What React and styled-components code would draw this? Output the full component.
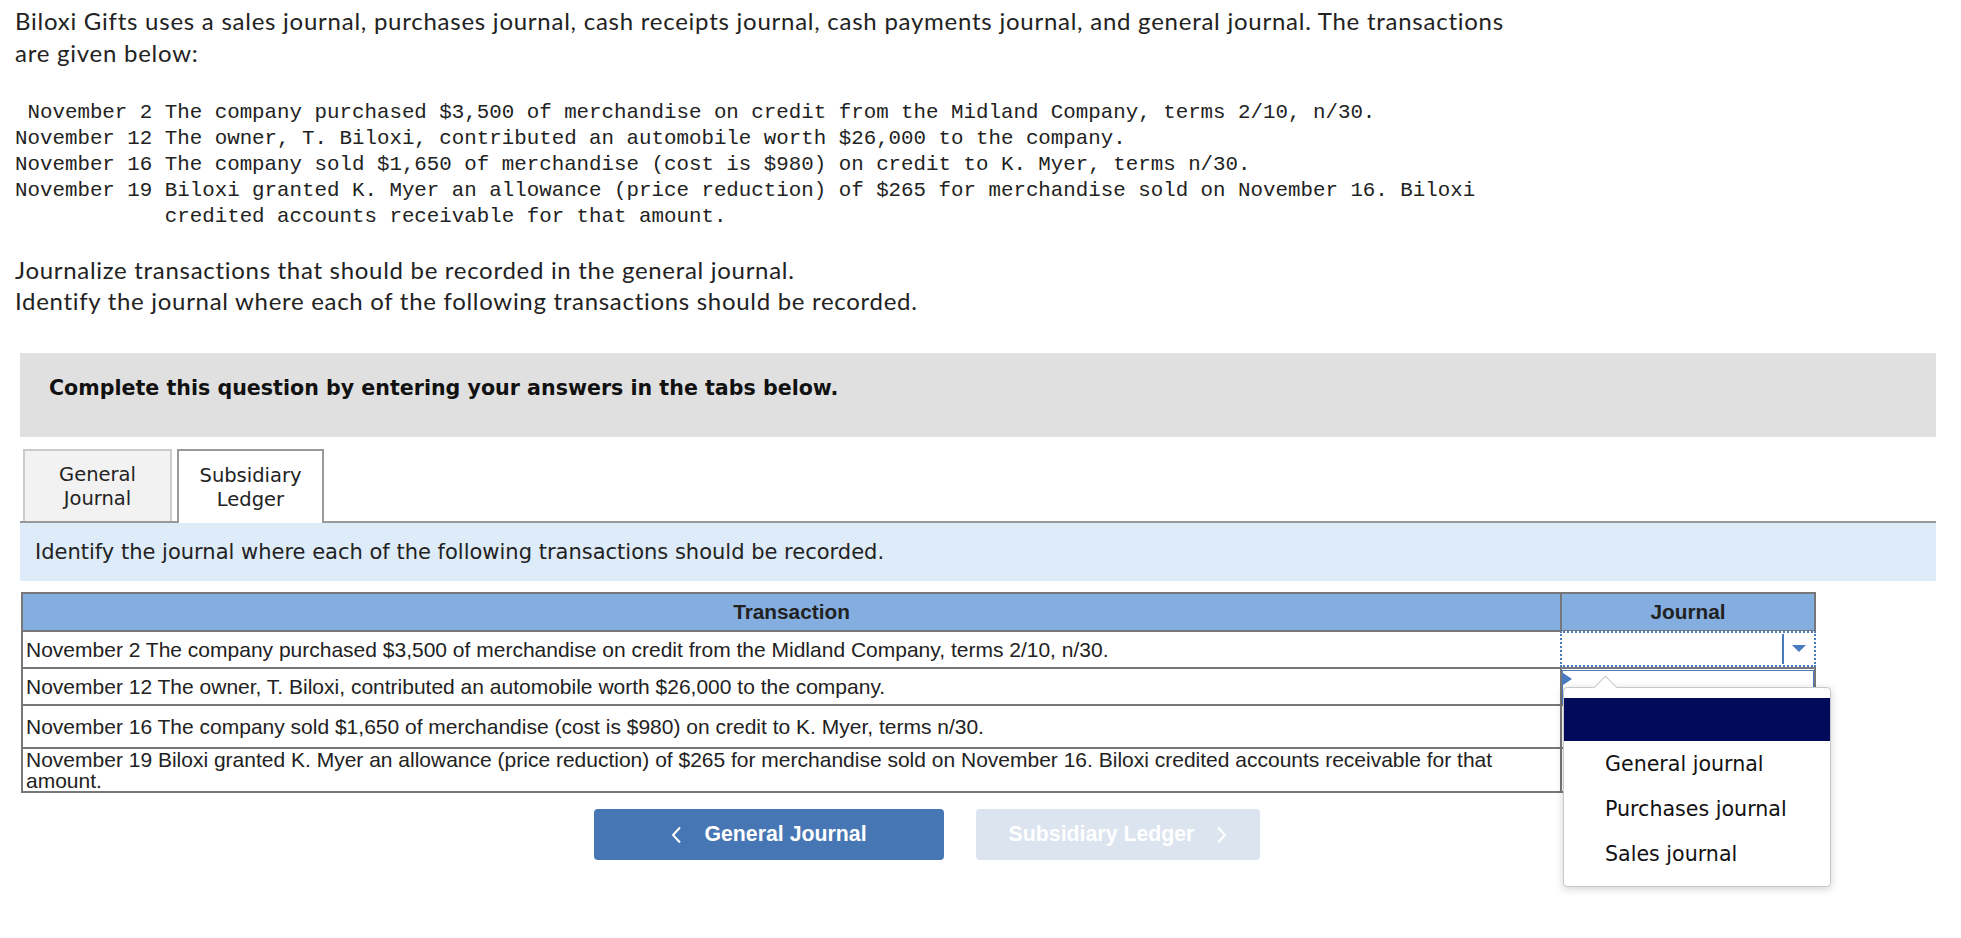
import React from 'react';
import styled, { createGlobalStyle } from 'styled-components';

/* Global */

const GlobalStyle = createGlobalStyle`
  body {
    margin: 0;
    background: #fff;
    color: #222;
  }
`;

/* Styled Components */

const Page = styled.div`
  padding: 5px 25px 40px 15px;
`;

const Intro = styled.p`
  margin: 0;
  max-width: 1520px;
  font-family: Lato, "Open Sans", sans-serif;
  font-size: 24px;
  letter-spacing: 0.75px;
  line-height: 32px;
  color: #222;
`;

const Listing = styled.pre`
  margin: 31px 0 0;
  font-family: "Liberation Mono", monospace;
  font-size: 20.8px;
  line-height: 26px;
  color: #222;
`;

const Instructions = styled.p`
  margin: 24px 0 0;
  font-family: Lato, "Open Sans", sans-serif;
  font-size: 24px;
  letter-spacing: 0.7px;
  line-height: 31px;
  color: #222;
`;

const Question = styled.div`
  margin: 37px 0 0 5px;
  width: 1916px;
`;

const Banner = styled.div`
  display: flex;
  align-items: center;
  height: 84px;
  box-sizing: border-box;
  padding: 0 29px 14px;
  background: #e0e0e0;
  font-family: "DejaVu Sans", Verdana, sans-serif;
  font-size: 20.6px;
  font-weight: bold;
  color: #111;
`;

const TabBar = styled.div`
  display: flex;
  gap: 5px;
  margin-top: 12px;
  padding-left: 3px;
  border-bottom: 2px solid #999;
`;

const Tab = styled.div`
  display: flex;
  align-items: center;
  justify-content: center;
  box-sizing: border-box;
  height: ${(props) => (props.active ? '74px' : '72px')};
  width: ${(props) => props.width}px;
  margin-bottom: ${(props) => (props.active ? '-2px' : '0')};
  padding-top: 2px;
  border: 2px solid ${(props) => (props.active ? '#999' : '#cbcbcb')};
  border-bottom: ${(props) => (props.active ? 'none' : '0')};
  background: ${(props) => (props.active ? '#fff' : '#f2f2f2')};
  font-family: "DejaVu Sans", Verdana, sans-serif;
  font-size: 19.5px;
  line-height: 24px;
  text-align: center;
  color: #222;
`;

const Prompt = styled.div`
  display: flex;
  align-items: center;
  height: 58px;
  padding-left: 15px;
  background: #deebf8;
  font-family: "DejaVu Sans", Verdana, sans-serif;
  font-size: 21px;
  color: #222;
`;

const Table = styled.table`
  margin: 11px 0 0 1px;
  width: 1793px;
  border-collapse: collapse;
  table-layout: fixed;
  font-family: "Liberation Sans", Arial, sans-serif;
  color: #222;
`;

const HeadCell = styled.th`
  height: 36px;
  padding: 0;
  border: 2px solid #777;
  background: #84aee0;
  font-size: 20.8px;
  font-weight: bold;
  text-align: center;
`;

const Cell = styled.td`
  height: ${(props) => props.h}px;
  padding: 0 10px 0 3px;
  border: 2px solid #777;
  font-size: 21px;
  line-height: 21px;
  vertical-align: middle;
`;

const JournalCell = styled.td`
  position: relative;
  height: ${(props) => props.h}px;
  padding: 0;
  border: 2px solid #777;
  vertical-align: top;
`;

const FocusSelect = styled.div`
  display: flex;
  box-sizing: border-box;
  height: 36px;
  margin: -1px -2px 0;
  border: 2px dotted #4a7ac0;
  background: #fff;
`;

const SelectValue = styled.div`
  flex: 1;
  margin: 1px 0;
  border-right: 2px solid #4a7ac0;
`;

const SelectArrow = styled.div`
  display: flex;
  align-items: center;
  justify-content: center;
  width: 30px;
`;

const OpenSelect = styled.div`
  position: relative;
  box-sizing: border-box;
  height: 34px;
  margin: 1px 0 0 0;
  border: 1px solid #4a7ac0;
  background: #fff;
`;

const Marker = styled.div`
  position: absolute;
  top: 2px;
  left: 0;
  width: 0;
  height: 0;
  border-top: 6px solid transparent;
  border-bottom: 6px solid transparent;
  border-left: 9px solid #4a7ac0;
`;

const Popup = styled.div`
  position: absolute;
  top: 16px;
  left: 0;
  z-index: 5;
  width: 268px;
  box-sizing: border-box;
  padding: 10px 0 10px;
  border: 1px solid #c9c9c9;
  border-radius: 4px;
  background: #fff;
  box-shadow: 0 2px 8px rgba(0, 0, 0, 0.18);
  font-family: "DejaVu Sans", Verdana, sans-serif;
  font-size: 20.6px;
  color: #111;
`;

const Caret = styled.div`
  position: absolute;
  top: -9px;
  left: 33px;
  width: 16px;
  height: 16px;
  background: #fff;
  border-top: 1px solid #c9c9c9;
  border-left: 1px solid #c9c9c9;
  transform: rotate(45deg);
`;

const Option = styled.div`
  position: relative;
  display: flex;
  align-items: center;
  height: ${(props) => (props.highlighted ? '43px' : '45px')};
  padding-left: 41px;
  background: ${(props) => (props.highlighted ? '#020a5c' : 'transparent')};
  color: ${(props) => (props.highlighted ? '#fff' : '#111')};
`;

const NavRow = styled.div`
  display: flex;
  gap: 32px;
  margin: 16px 0 0 574px;
`;

const NavButton = styled.div`
  display: flex;
  align-items: center;
  justify-content: center;
  gap: 22px;
  width: ${(props) => props.width}px;
  height: 51px;
  border-radius: 4px;
  background: ${(props) => (props.disabled ? '#dbe4ef' : '#4776b4')};
  font-family: "Liberation Sans", Arial, sans-serif;
  font-size: 21.3px;
  font-weight: bold;
  color: #fff;
`;

/* Data */

const listing = [
  ' November 2 The company purchased $3,500 of merchandise on credit from the Midland Company, terms 2/10, n/30.',
  'November 12 The owner, T. Biloxi, contributed an automobile worth $26,000 to the company.',
  'November 16 The company sold $1,650 of merchandise (cost is $980) on credit to K. Myer, terms n/30.',
  'November 19 Biloxi granted K. Myer an allowance (price reduction) of $265 for merchandise sold on November 16. Biloxi',
  '            credited accounts receivable for that amount.',
].join('\n');

const rows = [
  { id: 1, h: 32, text: 'November 2 The company purchased $3,500 of merchandise on credit from the Midland Company, terms 2/10, n/30.' },
  { id: 2, h: 31, text: 'November 12 The owner, T. Biloxi, contributed an automobile worth $26,000 to the company.' },
  { id: 3, h: 41, text: 'November 16 The company sold $1,650 of merchandise (cost is $980) on credit to K. Myer, terms n/30.' },
  { id: 4, h: 42, text: 'November 19 Biloxi granted K. Myer an allowance (price reduction) of $265 for merchandise sold on November 16. Biloxi credited accounts receivable for that amount.' },
];

const options = ['', 'General journal', 'Purchases journal', 'Sales journal'];

const Chevron = ({ dir }) => (
  <svg width="11" height="18" viewBox="0 0 11 18">
    <polyline
      points={dir === 'left' ? '9,1.5 2,9 9,16.5' : '2,1.5 9,9 2,16.5'}
      fill="none"
      stroke="#fff"
      strokeWidth="2"
    />
  </svg>
);

/* Main Component */

const App = () => (
  <Page>
    <GlobalStyle />

    <Intro>
      Biloxi Gifts uses a sales journal, purchases journal, cash receipts journal, cash payments
      journal, and general journal. The transactions are given below:
    </Intro>

    <Listing>{listing}</Listing>

    <Instructions>
      Journalize transactions that should be recorded in the general journal.
      <br />
      Identify the journal where each of the following transactions should be recorded.
    </Instructions>

    <Question>
      <Banner>Complete this question by entering your answers in the tabs below.</Banner>

      <TabBar>
        <Tab width={149}>
          General
          <br />
          Journal
        </Tab>
        <Tab width={147} active>
          Subsidiary
          <br />
          Ledger
        </Tab>
      </TabBar>

      <Prompt>Identify the journal where each of the following transactions should be recorded.</Prompt>

      <Table>
        <colgroup>
          <col style={{ width: 1539 }} />
          <col style={{ width: 254 }} />
        </colgroup>
        <thead>
          <tr>
            <HeadCell>Transaction</HeadCell>
            <HeadCell>Journal</HeadCell>
          </tr>
        </thead>
        <tbody>
          {rows.map((row) => (
            <tr key={row.id}>
              <Cell h={row.h}>{row.text}</Cell>
              <JournalCell h={row.h}>
                {row.id === 1 && (
                  <FocusSelect>
                    <SelectValue />
                    <SelectArrow>
                      <svg width="14" height="8" viewBox="0 0 14 8">
                        <polygon points="0,0 14,0 7,7" fill="#4a7ac0" />
                      </svg>
                    </SelectArrow>
                  </FocusSelect>
                )}
                {row.id === 2 && (
                  <OpenSelect>
                    <Marker />
                    <Popup>
                      <Caret />
                      {options.map((option, index) => (
                        <Option key={option || 'blank'} highlighted={index === 0}>
                          {option}
                        </Option>
                      ))}
                    </Popup>
                  </OpenSelect>
                )}
              </JournalCell>
            </tr>
          ))}
        </tbody>
      </Table>

      <NavRow>
        <NavButton width={350}>
          <Chevron dir="left" />
          General Journal
        </NavButton>
        <NavButton width={284} disabled>
          Subsidiary Ledger
          <Chevron dir="right" />
        </NavButton>
      </NavRow>
    </Question>
  </Page>
);

export default App;
